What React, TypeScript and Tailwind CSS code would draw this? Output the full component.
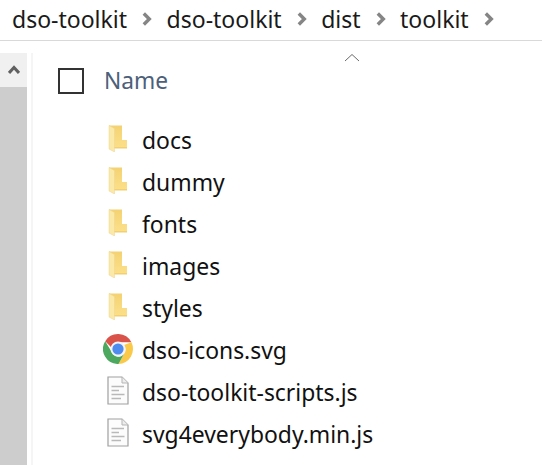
import React from "react";

const font = { fontFamily: '"Noto Sans", sans-serif' };

function Chevron() {
  return (
    <svg width="11.5" height="14" viewBox="0 0 11.5 14" className="shrink-0">
      <path d="M2.8 1.5 L8.3 7 L2.8 12.5" fill="none" stroke="#858585" strokeWidth="3.4" />
    </svg>
  );
}

function Folder() {
  return (
    <svg width="20" height="27" viewBox="0 0 20 27" className="shrink-0">
      <defs>
        <linearGradient id="fb" x1="0" y1="0" x2="0" y2="1">
          <stop offset="0" stopColor="#f4d272" />
          <stop offset="1" stopColor="#fbe08a" />
        </linearGradient>
      </defs>
      <path d="M1 0.5 H14 V15 H19 V23 H6 L1 21 Z" fill="url(#fb)" />
      <path d="M1 0.5 L6.5 3.5 V27 L1 24 Z" fill="#fbe9a8" stroke="#ecd591" strokeWidth="0.5" />
      <path d="M6.5 22 H19 V23.5 H6.5 Z" fill="#f3cf6e" />
    </svg>
  );
}

function Chrome() {
  return (
    <svg width="30" height="30" viewBox="0 0 30 30" className="shrink-0">
      <circle cx="15" cy="15" r="15" fill="#fff" />
      <path d="M2.2 7.2 A15 15 0 0 1 28.4 8.3 H15 A7 7 0 0 0 8.2 13.2 Z" fill="#d9534a" />
      <path d="M28.4 8.3 A15 15 0 0 1 15.5 30 L21 20 A7 7 0 0 0 21 11 Z" fill="#fbc94a" />
      <path d="M2.2 7.2 A15 15 0 0 0 15.5 30 L21 20 A7 7 0 0 1 9 18.5 Z" fill="#4ca85e" />
      <circle cx="15" cy="15" r="7.5" fill="#f1f3f4" />
      <circle cx="15" cy="15" r="5.6" fill="#4f8cf0" />
    </svg>
  );
}

function FileIcon() {
  return (
    <svg width="22" height="29" viewBox="0 0 22 29" className="shrink-0">
      <path d="M1 1 H15 L21 7 V28 H1 Z" fill="#fcfcfc" stroke="#a0a0a0" strokeWidth="1.2" />
      <path d="M15 1 V7 H21" fill="#ededed" stroke="#b5b5b5" strokeWidth="1" />
      <path d="M4.5 10.5 H17 M4.5 14.5 H12 M4.5 18.5 H17.5 M4.5 22.5 H14" stroke="#b9b9b9" strokeWidth="1.7" />
    </svg>
  );
}

const rows: { name: string; kind: "folder" | "chrome" | "file" }[] = [
  { name: "docs", kind: "folder" },
  { name: "dummy", kind: "folder" },
  { name: "fonts", kind: "folder" },
  { name: "images", kind: "folder" },
  { name: "styles", kind: "folder" },
  { name: "dso-icons.svg", kind: "chrome" },
  { name: "dso-toolkit-scripts.js", kind: "file" },
  { name: "svg4everybody.min.js", kind: "file" },
];

const crumbs = ["dso-toolkit", "dso-toolkit", "dist", "toolkit"];

export default function App() {
  return (
    <div className="w-[542px] h-[465px] bg-white overflow-hidden flex flex-col text-[#1a1a1a]" style={font}>
      <div className="h-[41px] shrink-0 border-b border-[#d9d9d9] flex items-center pl-[12px] gap-[14px] text-[23px] leading-none pb-[2px]">
        {crumbs.map((c, i) => (
          <React.Fragment key={i}>
            <span>{c}</span>
            <Chevron />
          </React.Fragment>
        ))}
      </div>
      <div className="flex flex-1 min-h-0 pt-[12px]">
        <div className="w-[27px] shrink-0 bg-[#cdcdcd] flex flex-col">
          <div className="h-[34px] bg-[#f0f0f0] flex items-center justify-center pb-[1px]">
            <svg width="12" height="9" viewBox="0 0 12 9">
              <path d="M1 8 L6 2.5 L11 8" fill="none" stroke="#606060" strokeWidth="3" />
            </svg>
          </div>
        </div>
        <div className="w-[4px] shrink-0" />
        <div className="w-[2px] shrink-0 bg-[#f5f5f5]" />
        <div className="flex-1 min-w-0 flex flex-col relative">
          <svg width="16" height="9" viewBox="0 0 16 9" className="absolute left-[311px] top-[0px]">
            <path d="M1 8 L8 1.5 L15 8" fill="none" stroke="#6a6a6a" strokeWidth="1" />
          </svg>
          <div className="h-[55px] shrink-0 flex items-center pl-[25px]">
            <div className="w-[26px] h-[26px] border-2 border-[#333333]" />
            <span className="ml-[20px] pt-[2px] text-[22.7px] leading-none text-[#4c607a]">Name</span>
          </div>
          <div className="flex flex-col pt-[12px]">
            {rows.map((r) => (
              <div key={r.name} className="h-[42px] flex items-center relative pl-[109px] text-[22.9px] leading-none text-[#111111]">
                <div className="absolute left-[70px] top-0 bottom-0 w-[30px] pb-[5px] flex items-center justify-center">
                  {r.kind === "folder" && <Folder />}
                  {r.kind === "chrome" && <Chrome />}
                  {r.kind === "file" && <FileIcon />}
                </div>
                <span>{r.name}</span>
              </div>
            ))}
          </div>
        </div>
      </div>
    </div>
  );
}
